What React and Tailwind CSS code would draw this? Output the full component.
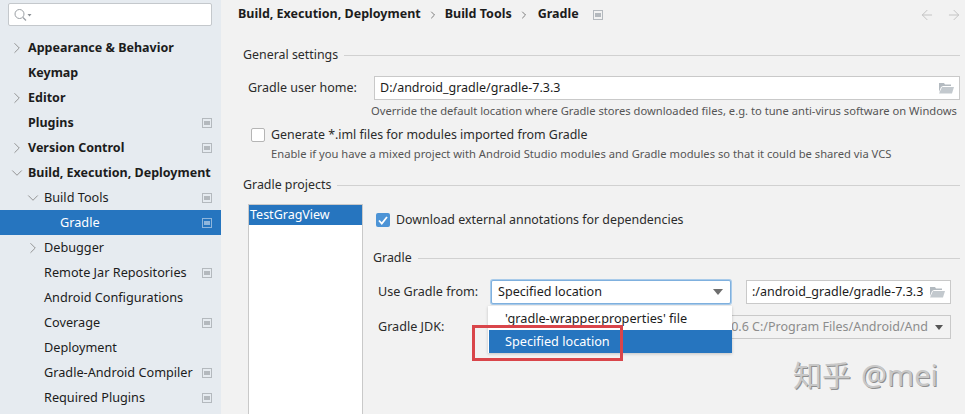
import React from "react";
import { ChevronRight, ChevronDown, ArrowLeft, ArrowRight } from "lucide-react";

const font = "font-['Noto_Sans','Open_Sans',sans-serif]";

const treeItems = [
  { label: "Appearance & Behavior", bold: true, arrow: "right", level: 0 },
  { label: "Keymap", bold: true, level: 0 },
  { label: "Editor", bold: true, arrow: "right", level: 0 },
  { label: "Plugins", bold: true, level: 0, badge: true },
  { label: "Version Control", bold: true, arrow: "right", level: 0, badge: true },
  { label: "Build, Execution, Deployment", bold: true, arrow: "down", level: 0 },
  { label: "Build Tools", arrow: "down", level: 1, badge: true },
  { label: "Gradle", level: 2, badge: true, selected: true },
  { label: "Debugger", arrow: "right", level: 1 },
  { label: "Remote Jar Repositories", level: 1, badge: true },
  { label: "Android Configurations", level: 1 },
  { label: "Coverage", level: 1, badge: true },
  { label: "Deployment", level: 1 },
  { label: "Gradle-Android Compiler", level: 1, badge: true },
  { label: "Required Plugins", level: 1, badge: true },
];

// little "project level" marker shown at the end of a row
const ProjectBadge = ({ selected }) => (
  <svg width="10" height="10" viewBox="0 0 10 10" className="shrink-0">
    <rect x="0.5" y="0.5" width="9" height="9" fill="none" stroke={selected ? "#8fb6dc" : "#b4b9be"} />
    <rect x="2" y="3" width="6" height="4" fill={selected ? "#8fb6dc" : "#b4b9be"} />
  </svg>
);

const FolderIcon = () => (
  <svg width="15" height="12" viewBox="0 0 15 12" className="shrink-0">
    <path d="M0 1h5l1 1.500h6V4H4L2 5 0 10z" fill="#b3bac0" />
    <path d="M3 5h12l-2 6.500H0z" fill="#c3c9ce" />
  </svg>
);

const Caret = ({ color = "#6e6e6e", width = 10, height = 6 }) => (
  <svg width={width} height={height} viewBox="0 0 10 6" className="shrink-0">
    <path d="M0 0h10L5 6z" fill={color} />
  </svg>
);

const SearchBox = () => (
  <div className="mx-2 mt-[3px] flex h-[23px] w-[204px] items-center rounded-[2px] border border-[#c4c8cc] bg-white pl-[4px]">
    <svg width="20" height="14" viewBox="0 0 20 14">
      <circle cx="6.500" cy="6" r="4.500" fill="none" stroke="#9a9fa4" strokeWidth="1" />
      <path d="M10 9.500l3 3" stroke="#9a9fa4" strokeWidth="1.200" />
      <path d="M14.500 6h4l-2 2.500z" fill="#8a8f94" />
    </svg>
  </div>
);

const TreeRow = ({ item }) => {
  const pad = item.level === 0 ? "pl-[28px]" : item.level === 1 ? "pl-[44px]" : "pl-[60px]";
  const arrowPos = item.level === 0 ? "left-[8px]" : "left-[24px]";
  return (
    <div
      className={`relative flex h-[25px] items-center pr-[9px] ${pad} ${
        item.selected ? "bg-[#2675bf] text-white" : "text-[#1c1c1c]"
      } ${item.bold ? "text-[12.500px] font-bold" : "text-[12.700px]"}`}
    >
      {item.arrow === "right" && (
        <ChevronRight size={18} strokeWidth={1.200} className={`absolute ${arrowPos} text-[#8a8a8a]`} />
      )}
      {item.arrow === "down" && (
        <ChevronDown size={18} strokeWidth={1.200} className={`absolute ${arrowPos} text-[#8a8a8a]`} />
      )}
      <span className={`flex-1 whitespace-nowrap ${item.bold ? "pt-[2px]" : ""}`}>{item.label}</span>
      {item.badge && <ProjectBadge selected={item.selected} />}
    </div>
  );
};

const GroupTitle = ({ children, className = "" }) => (
  <div className={`flex h-[14px] items-center gap-[6px] text-[12.400px] text-[#2b2b2b] ${className}`}>
    <span className="whitespace-nowrap">{children}</span>
    <div className="h-px flex-1 bg-[#d1d1d1]" />
  </div>
);

const Checkbox = ({ checked }) =>
  checked ? (
    <div className="flex h-[14px] w-[14px] shrink-0 items-center justify-center rounded-[2px] bg-[#4d94d6]">
      <svg width="10" height="9" viewBox="0 0 10 9">
        <path d="M1 4.500l2.800 3L9 1" fill="none" stroke="white" strokeWidth="1.800" />
      </svg>
    </div>
  ) : (
    <div className="h-[14px] w-[14px] shrink-0 rounded-[2px] border border-[#b5b5b5] bg-white" />
  );

export default function App() {
  return (
    <div className={`${font} flex h-[414px] w-[965px] overflow-hidden bg-[#f2f2f2] leading-none`}>
      {/* Sidebar */}
      <div className="h-full w-[221px] shrink-0 bg-[#e6ebf0]">
        <SearchBox />
        <div className="mt-[9px]">
          {treeItems.map((item) => (
            <TreeRow key={item.label} item={item} />
          ))}
        </div>
      </div>

      {/* Content */}
      <div className="relative min-w-0 flex-1 pl-[17px] pr-[5px]">
        {/* Breadcrumb */}
        <div className="flex h-[29px] items-center text-[12.500px] font-bold text-[#1c1c1c]">
          <span>Build, Execution, Deployment</span>
          <ChevronRight size={12} strokeWidth={1.500} className="mx-[6px] text-[#555]" />
          <span>Build Tools</span>
          <ChevronRight size={12} strokeWidth={1.500} className="ml-[6px] mr-[8px] text-[#555]" />
          <span>Gradle</span>
          <span className="ml-[14px]">
            <ProjectBadge />
          </span>
          <div className="-mr-[2px] ml-auto flex items-center gap-[11px] text-[#c4c4c4]">
            <ArrowLeft size={16} strokeWidth={1.500} />
            <ArrowRight size={16} strokeWidth={1.500} />
          </div>
        </div>

        <div className="pl-[5px]">
          <GroupTitle className="mt-[19px]">General settings</GroupTitle>

          <div className="mt-[14px] flex items-center pl-[5px]">
            <div className="w-[126px] text-[12.500px] text-[#2b2b2b]">Gradle user home:</div>
            <div className="flex h-[24px] flex-1 items-center justify-between border border-[#c9c9c9] bg-white pl-[5px] pr-[5px] text-[12.500px] text-[#1c1c1c]">
              D:/android_gradle/gradle-7.3.3
              <FolderIcon />
            </div>
          </div>
          <div className="mt-[4px] h-[14px] pl-[128px] text-[11.200px] leading-[14px] whitespace-nowrap text-[#555]">
            Override the default location where Gradle stores downloaded files, e.g. to tune anti-virus software on Windows
          </div>

          <div className="mt-[10px] flex items-center gap-[6px] pl-[8px] text-[12.400px] text-[#2b2b2b]">
            <Checkbox />
            Generate *.iml files for modules imported from Gradle
          </div>
          <div className="mt-[5px] h-[14px] pl-[28px] text-[11.200px] leading-[14px] whitespace-nowrap text-[#555]">
            Enable if you have a mixed project with Android Studio modules and Gradle modules so that it could be shared via VCS
          </div>

          <GroupTitle className="mt-[17px]">Gradle projects</GroupTitle>

          <div className="mt-[12px] flex pl-[5px]">
            {/* Project list */}
            <div className="h-[220px] w-[115px] shrink-0 border-x border-t border-[#c9c9c9] bg-white">
              <div className="flex h-[20px] items-center bg-[#2675bf] pl-[1px] text-[12.500px] text-white">TestGragView</div>
            </div>

            {/* Project settings */}
            <div className="min-w-0 flex-1 pl-[10px]">
              <div className="mt-[9px] flex items-center gap-[6px] pl-[3px] text-[12.400px] text-[#2b2b2b]">
                <Checkbox checked />
                Download external annotations for dependencies
              </div>

              <GroupTitle className="mt-[24px]">Gradle</GroupTitle>

              <div className="mt-[15px] flex items-center pl-[5px]">
                <div className="w-[113px] text-[12.600px] text-[#2b2b2b]">Use Gradle from:</div>
                <div className="flex h-[24px] w-[240px] shrink-0 items-center justify-between rounded-[2px] border border-[#7fb0de] bg-white pl-[6px] pr-[7px] text-[12.600px] text-[#1c1c1c] shadow-[0_0_0_1px_#a9cbea]">
                  Specified location
                  <Caret />
                </div>
                <div className="ml-[15px] flex h-[24px] w-[205px] shrink-0 items-center justify-between border border-[#c9c9c9] bg-white pl-[5px] pr-[5px] text-[12.500px] text-[#1c1c1c]">
                  <span className="whitespace-nowrap">:/android_gradle/gradle-7.3.3</span>
                  <FolderIcon />
                </div>
              </div>

              <div className="mt-[11px] flex items-center pl-[5px]">
                <div className="w-[113px] text-[12.600px] text-[#2b2b2b]">Gradle JDK:</div>
                <div className="flex h-[24px] w-[460px] shrink-0 items-center justify-end gap-[7px] border border-[#c9c9c9] bg-[#f2f2f2] pr-[7px] text-[12.500px] whitespace-nowrap text-[#8c8c8c]">
                  0.6 C:/Program Files/Android/And
                  <Caret color="#555" width={8} height={5} />
                </div>
              </div>
            </div>
          </div>
        </div>

        {/* Open dropdown */}
        <div className="absolute left-[267px] top-[306px] w-[244px] bg-white pl-px text-[12.700px] shadow-[0_1px_3px_rgba(0,0,0,0.200)]">
          <div className="flex h-[24px] items-center pl-[16px] text-[#1c1c1c]">'gradle-wrapper.properties' file</div>
          <div className="flex h-[23px] items-center bg-[#2675bf] pl-[16px] text-white">Specified location</div>
        </div>

        {/* Red highlight drawn on the screenshot */}
        <div className="absolute left-[251px] top-[325px] h-[36px] w-[151px] border-[3px] border-[#d9454a]" />

        {/* Watermark */}
        <div className="absolute left-[572px] top-[360px] flex items-center gap-[10px] text-[29px] text-[#c8c8c8] [text-shadow:1px_1px_0_#8f8f8f]">
          <span className="font-['Noto_Sans_CJK_SC',sans-serif]">知乎</span>
          <span>@mei</span>
        </div>
      </div>
    </div>
  );
}
